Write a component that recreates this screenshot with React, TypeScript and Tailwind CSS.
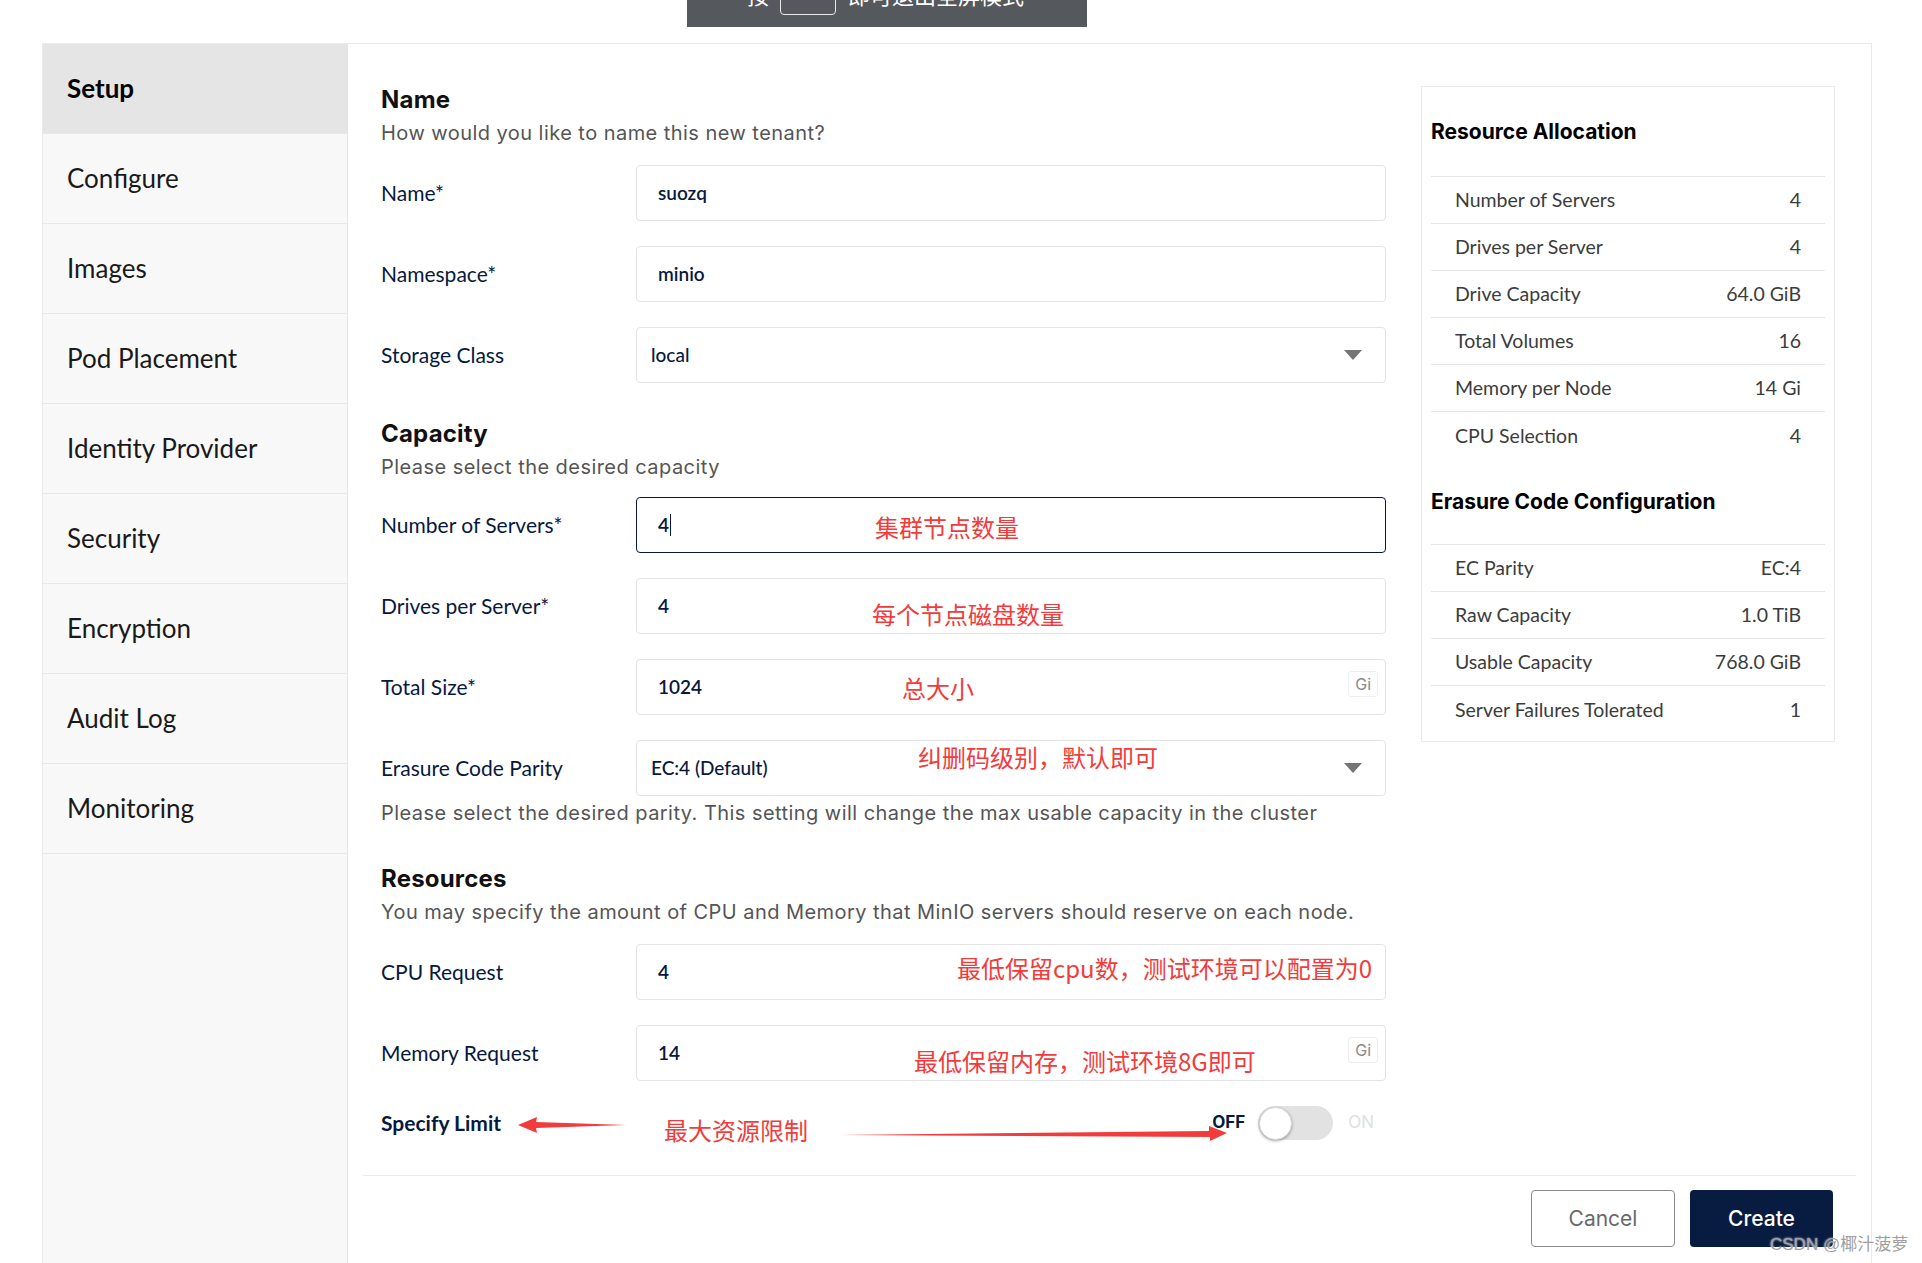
import React from 'react';

const sideItems = [
  'Setup',
  'Configure',
  'Images',
  'Pod Placement',
  'Identity Provider',
  'Security',
  'Encryption',
  'Audit Log',
  'Monitoring',
];

const resourceRows = [
  ['Number of Servers', '4'],
  ['Drives per Server', '4'],
  ['Drive Capacity', '64.0 GiB'],
  ['Total Volumes', '16'],
  ['Memory per Node', '14 Gi'],
  ['CPU Selection', '4'],
];

const ecRows = [
  ['EC Parity', 'EC:4'],
  ['Raw Capacity', '1.0 TiB'],
  ['Usable Capacity', '768.0 GiB'],
  ['Server Failures Tolerated', '1'],
];

// red notes drawn over the screenshot
const notes: { text: string; left: string; top: string }[] = [
  { text: '集群节点数量', left: 'left-[875px]', top: 'top-[515px]' },
  { text: '每个节点磁盘数量', left: 'left-[872px]', top: 'top-[602px]' },
  { text: '总大小', left: 'left-[902px]', top: 'top-[676px]' },
  { text: '纠删码级别，默认即可', left: 'left-[918px]', top: 'top-[745px]' },
  { text: '最低保留cpu数，测试环境可以配置为0', left: 'left-[957px]', top: 'top-[956px]' },
  { text: '最低保留内存，测试环境8G即可', left: 'left-[914px]', top: 'top-[1049px]' },
  { text: '最大资源限制', left: 'left-[664px]', top: 'top-[1118px]' },
];

function Section({ title, sub }: { title: string; sub: string }) {
  return (
    <div>
      <h3 className="font-[Inter,sans-serif] font-bold text-[24px] leading-[28px] tracking-[0.2px] text-[#111]">{title}</h3>
      <p className="mt-[6px] font-[Inter,sans-serif] text-[20px] leading-[26px] tracking-[0.45px] text-[#555]">{sub}</p>
    </div>
  );
}

function Field({
  label,
  children,
  className = '',
}: {
  label: string;
  children: React.ReactNode;
  className?: string;
}) {
  return (
    <div className={`flex items-center h-[56px] ${className}`}>
      <div className="w-[255px] text-[21px] text-[#07193E]">{label}</div>
      <div className="flex-1 h-full">{children}</div>
    </div>
  );
}

function TextBox({ value, focused, unit }: { value: React.ReactNode; focused?: boolean; unit?: boolean }) {
  return (
    <div
      className={`flex h-full items-center rounded-[4px] border pl-[21px] pr-[7px] ${
        focused ? 'border-[#07193E]' : 'border-[#e4e4e4]'
      }`}
    >
      <div className="flex-1 flex items-center text-[19px] font-semibold text-[#07193E]">{value}</div>
      {unit && (
        <div className="self-start mt-[11px] h-[26px] px-[6px] flex items-center rounded-[3px] border border-[#eeeeee] font-[Inter,sans-serif] text-[16px] text-[#8a8a8a]">
          Gi
        </div>
      )}
    </div>
  );
}

function SelectBox({ value }: { value: string }) {
  return (
    <div className="flex h-full items-center rounded-[4px] border border-[#e4e4e4] pl-[14px] pr-[23px]">
      <div className="flex-1 text-[19px] font-medium text-[#07193E]">{value}</div>
      <svg width="18" height="10" viewBox="0 0 18 10">
        <path d="M0 0 L18 0 L9 10 Z" fill="#757575" />
      </svg>
    </div>
  );
}

function InfoTable({ rows }: { rows: string[][] }) {
  return (
    <div className="border-t border-[#e5e5e5]">
      {rows.map(([k, v], i) => (
        <div
          key={k}
          className={`flex h-[47px] items-center justify-between px-[24px] text-[19.5px] text-[#3c3c3c] ${
            i < rows.length - 1 ? 'border-b border-[#e5e5e5]' : ''
          }`}
        >
          <span>{k}</span>
          <span>{v}</span>
        </div>
      ))}
    </div>
  );
}

export default function App() {
  return (
    <div className="relative h-[1263px] w-full overflow-hidden bg-white font-[Lato,sans-serif]">
      {/* fullscreen hint bar, mostly scrolled off the top */}
      <div className="absolute left-[687px] top-0 h-[27px] w-[400px] overflow-hidden bg-[#55585d]">
        <div className="mt-[-17px] flex items-start pl-[60px] font-['Noto_Sans_CJK_SC',sans-serif] text-[22px] leading-[22px] text-white">
          <span>按</span>
          <span className="ml-[11px] h-[32px] w-[56px] rounded-[4px] border border-[#e8e8e8]"></span>
          <span className="ml-[12px]">即可退出全屏模式</span>
        </div>
      </div>

      <div className="ml-[42px] mt-[43px] flex h-[1300px] w-[1830px] border border-[#eaeaea]">
        {/* sidebar */}
        <div className="w-[305px] border-r border-[#e5e5e5] bg-[#f8f8f8]">
          {sideItems.map((item, i) => (
            <div
              key={item}
              className={`flex h-[90px] items-center border-b border-[#e8e8e8] pl-[24px] text-[26px] ${
                i === 0 ? 'bg-[#e5e5e5] font-bold text-[#000]' : 'text-[#1a1a1a]'
              }`}
            >
              {item}
            </div>
          ))}
        </div>

        {/* main */}
        <div className="flex-1 px-[15px] pt-[42px]">
          <div className="flex gap-[35px] pl-[18px] pr-[20px]">
            <div className="w-[1005px]">
              <Section title="Name" sub="How would you like to name this new tenant?" />
              <Field label="Name*" className="mt-[19px]">
                <TextBox value="suozq" />
              </Field>
              <Field label="Namespace*" className="mt-[25px]">
                <TextBox value="minio" />
              </Field>
              <Field label="Storage Class" className="mt-[25px]">
                <SelectBox value="local" />
              </Field>

              <div className="mt-[37px]">
                <Section title="Capacity" sub="Please select the desired capacity" />
              </div>
              <Field label="Number of Servers*" className="mt-[17px]">
                <TextBox
                  focused
                  value={
                    <>
                      4<span className="ml-[1px] h-[22px] w-[1px] bg-[#07193E]"></span>
                    </>
                  }
                />
              </Field>
              <Field label="Drives per Server*" className="mt-[25px]">
                <TextBox value="4" />
              </Field>
              <Field label="Total Size*" className="mt-[25px]">
                <TextBox value="1024" unit />
              </Field>
              <Field label="Erasure Code Parity" className="mt-[25px]">
                <SelectBox value="EC:4 (Default)" />
              </Field>
              <p className="mt-[4px] font-[Inter,sans-serif] text-[20px] leading-[26px] tracking-[0.45px] text-[#555]">
                Please select the desired parity. This setting will change the max usable capacity in the cluster
              </p>

              <div className="mt-[39px]">
                <Section
                  title="Resources"
                  sub="You may specify the amount of CPU and Memory that MinIO servers should reserve on each node."
                />
              </div>
              <Field label="CPU Request" className="mt-[19px]">
                <TextBox value="4" />
              </Field>
              <Field label="Memory Request" className="mt-[25px]">
                <TextBox value="14" unit />
              </Field>

              <div className="mt-[24px] flex h-[36px] items-center justify-between pr-[12px]">
                <span className="text-[21px] font-bold text-[#07193E]">Specify Limit</span>
                <div className="flex items-center font-[Inter,sans-serif] text-[17px] font-bold">
                  <span className="text-[#07193E]">OFF</span>
                  <div className="ml-[13px] flex h-[34px] w-[75px] items-center rounded-full bg-[#e2e2e2] pl-[1px]">
                    <div className="h-[33px] w-[33px] rounded-full border border-[#d8d8d8] bg-white shadow-[0_1px_3px_rgba(0,0,0,0.35)]"></div>
                  </div>
                  <span className="ml-[15px] font-normal text-[#e0e0e0]">ON</span>
                </div>
              </div>
            </div>

            {/* summary panel */}
            <div className="w-[414px] self-start border border-[#eaeaea] px-[9px] pb-[8px] pt-[33px]">
              <h4 className="font-[Inter,sans-serif] text-[21px] font-bold leading-[24px] text-[#000]">
                Resource Allocation
              </h4>
              <div className="mt-[32px]">
                <InfoTable rows={resourceRows} />
              </div>
              <h4 className="mt-[31px] font-[Inter,sans-serif] text-[21px] font-bold leading-[24px] text-[#000]">
                Erasure Code Configuration
              </h4>
              <div className="mt-[30px]">
                <InfoTable rows={ecRows} />
              </div>
            </div>
          </div>

          <div className="mt-[34px] border-t border-[#eaeaea]"></div>
          <div className="mt-[14px] flex justify-end gap-[15px] pr-[23px] font-[Inter,sans-serif] text-[21px]">
            <button className="h-[57px] w-[144px] rounded-[4px] border border-[#8a8a8a] text-[#6a6a6a]">Cancel</button>
            <button className="h-[57px] w-[143px] rounded-[4px] bg-[#081C42] font-medium text-white">Create</button>
          </div>
        </div>
      </div>

      {/* annotations */}
      {notes.map((n) => (
        <div
          key={n.text}
          className={`absolute ${n.left} ${n.top} whitespace-nowrap font-['Noto_Sans_CJK_SC',sans-serif] text-[24px] leading-[24px] text-[#f23b3b]`}
        >
          {n.text}
        </div>
      ))}
      <svg className="absolute left-0 top-0" width="1922" height="1263" viewBox="0 0 1922 1263" fill="#f23b3b">
        <path d="M518 1125 L537 1117 L536 1122 L626 1125 L536 1128 L537 1133 Z" />
        <path d="M839 1135 L1209 1131 L1209 1126 L1227 1133 L1210 1141 L1210 1137 Z" />
      </svg>

      <div className="absolute left-[1770px] top-[1233px] whitespace-nowrap font-['Liberation_Sans','Noto_Sans_CJK_SC',sans-serif] text-[17px] leading-[24px] text-[#a0a0a0] [text-shadow:0_0_2px_#fff]">
        CSDN @椰汁菠萝
      </div>
    </div>
  );
}
